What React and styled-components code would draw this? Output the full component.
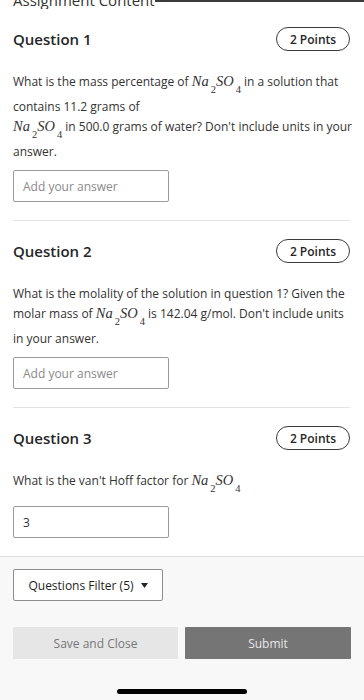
import React from "react";
import styled, { createGlobalStyle } from "styled-components";

const Global = createGlobalStyle`
  html, body {
    margin: 0;
    padding: 0;
    background: #ffffff;
    overflow: hidden;
  }
  body {
    font-family: "Open Sans", "Noto Sans", sans-serif;
    color: #333333;
    -webkit-font-smoothing: antialiased;
  }
  * { box-sizing: border-box; }
`;

const Page = styled.div`
  width: 364px;
  height: 700px;
  display: flex;
  flex-direction: column;
  background: #ffffff;
  position: relative;
  overflow: hidden;
`;

const TopBar = styled.div`
  height: 9px;
  flex: none;
  padding: 0 13px;
  display: flex;
  align-items: flex-end;
  overflow: hidden;
  position: relative;
`;

const TopTitle = styled.div`
  font-size: 15px;
  line-height: 15px;
  color: #333333;
  white-space: nowrap;
  margin-bottom: 1px;
`;

const TopEdge = styled.div`
  position: absolute;
  top: 0;
  left: 155px;
  right: 0;
  height: 1.5px;
  background: #3c3c3c;
`;

const Question = styled.section`
  flex: none;
  margin: 0 14px 0 13px;
  padding: 18px 0 18px;
  border-bottom: ${(p) => (p.$last ? "none" : "1px solid #e3e3e3")};
`;

const Header = styled.div`
  display: flex;
  align-items: center;
  justify-content: space-between;
  height: 24px;
`;

const Heading = styled.h2`
  margin: 0;
  font-size: 15px;
  font-weight: 600;
  color: #262626;
  line-height: 20px;
`;

const Pill = styled.div`
  width: 74px;
  height: 24px;
  border: 1px solid #3a3a3a;
  border-radius: 12px;
  display: flex;
  align-items: center;
  justify-content: center;
  font-size: 12px;
  font-weight: 600;
  color: #262626;
`;

const Body = styled.div`
  padding-top: 21px;
  font-size: 12px;
  color: #333333;
`;

const Line = styled.div`
  line-height: 20px;
  white-space: nowrap;
  padding-bottom: ${(p) => (p.$pad ? `${p.$pad}px` : "0")};
`;

const Math = styled.span`
  line-height: 0;
  font-family: "Liberation Serif", "DejaVu Serif", serif;
`;

const MathVar = styled.i`
  font-size: 14.5px;
  line-height: 0;
  font-style: italic;
`;

const MathSub = styled.span`
  font-size: 10.5px;
  line-height: 0;
  vertical-align: -7px;
  margin: 0 0 0 2px;
`;

const Answer = styled.input`
  display: block;
  margin-top: 8px;
  width: 156px;
  height: 32px;
  border: 1px solid #9a9a9a;
  border-radius: 2px;
  padding: 0 9px;
  font-family: "Open Sans", "Noto Sans", sans-serif;
  font-size: 12px;
  color: #333333;
  background: #ffffff;
  outline: none;
  &::placeholder {
    color: #8a8a8a;
  }
`;

const Footer = styled.footer`
  flex: 1;
  background: #f8f8f8;
  border-top: 1px solid #dcdcdc;
  padding: 12px 13px 0;
  display: flex;
  flex-direction: column;
`;

const FilterButton = styled.button`
  width: 150px;
  height: 32px;
  border: 1px solid #8e8e8e;
  border-radius: 2px;
  background: #ffffff;
  display: inline-flex;
  align-items: center;
  justify-content: center;
  gap: 7px;
  padding: 0;
  font-family: "Open Sans", "Noto Sans", sans-serif;
  font-size: 12px;
  font-weight: 500;
  color: #1e1e1e;
`;

const Actions = styled.div`
  margin-top: 26px;
  display: grid;
  grid-template-columns: 165px 166px;
  column-gap: 7px;
`;

const ActionButton = styled.button`
  height: 32px;
  border: none;
  border-radius: 1px;
  background: ${(p) => (p.$primary ? "#757575" : "#e6e6e6")};
  color: ${(p) => (p.$primary ? "#e6e6e6" : "#777777")};
  font-family: "Open Sans", "Noto Sans", sans-serif;
  font-size: 12px;
  font-weight: 400;
  padding: 0;
`;

const HomeIndicator = styled.div`
  margin: 30px auto 0;
  width: 130px;
  height: 5px;
  border-radius: 3px;
  background: #000000;
`;

const Na2SO4 = () => (
  <Math>
    <MathVar>Na</MathVar>
    <MathSub>2</MathSub>
    <MathVar>SO</MathVar>
    <MathSub>4</MathSub>
  </Math>
);

const Caret = () => (
  <svg width="7" height="5" viewBox="0 0 7 5" aria-hidden="true">
    <path d="M0 0 L7 0 L3.5 5 Z" fill="#262626" />
  </svg>
);

export default function App() {
  return (
    <Page>
      <Global />
      <TopBar>
        <TopTitle>Assignment Content</TopTitle>
        <TopEdge />
      </TopBar>

      <Question>
        <Header>
          <Heading>Question 1</Heading>
          <Pill>2 Points</Pill>
        </Header>
        <Body>
          <Line $pad={5}>
            What is the mass percentage of <Na2SO4 /> in a solution that
          </Line>
          <Line>contains 11.2 grams of</Line>
          <Line $pad={5}>
            <Na2SO4 /> in 500.0 grams of water? Don't include units in your
          </Line>
          <Line>answer.</Line>
        </Body>
        <Answer placeholder="Add your answer" />
      </Question>

      <Question>
        <Header>
          <Heading>Question 2</Heading>
          <Pill>2 Points</Pill>
        </Header>
        <Body>
          <Line>What is the molality of the solution in question 1? Given the</Line>
          <Line $pad={5}>
            molar mass of <Na2SO4 /> is 142.04 g/mol. Don't include units
          </Line>
          <Line>in your answer.</Line>
        </Body>
        <Answer placeholder="Add your answer" />
      </Question>

      <Question $last>
        <Header>
          <Heading>Question 3</Heading>
          <Pill>2 Points</Pill>
        </Header>
        <Body>
          <Line $pad={7}>
            What is the van't Hoff factor for <Na2SO4 />
          </Line>
        </Body>
        <Answer defaultValue="3" />
      </Question>

      <Footer>
        <div>
          <FilterButton>
            Questions Filter (5)
            <Caret />
          </FilterButton>
        </div>
        <Actions>
          <ActionButton>Save and Close</ActionButton>
          <ActionButton $primary>Submit</ActionButton>
        </Actions>
        <HomeIndicator />
      </Footer>
    </Page>
  );
}
